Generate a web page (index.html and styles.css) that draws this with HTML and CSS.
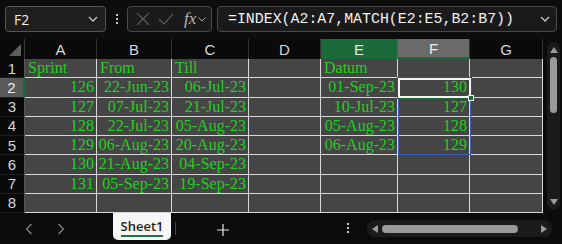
FILE: index.html
```html
<!DOCTYPE html>
<html>
<head>
<meta charset="utf-8">
<link rel="stylesheet" href="styles.css">
</head>
<body>
<div class="app">
  <div class="topbar">
    <div class="namebox">
      <span class="nb-text">F2</span>
      <svg class="chev" width="10" height="6" viewBox="0 0 10 6"><path d="M1 1 L5 5 L9 1" fill="none" stroke="#c8c8c8" stroke-width="1.3"/></svg>
    </div>
    <div class="vdots"><span></span><span></span><span></span></div>
    <div class="fxbox">
      <svg width="14" height="14" viewBox="0 0 14 14"><path d="M1 1 L13 13 M13 1 L1 13" stroke="#5a5a5a" stroke-width="1.2"/></svg>
      <svg width="16" height="12" viewBox="0 0 16 12"><path d="M1 6 L6 11 L15 1" fill="none" stroke="#5a5a5a" stroke-width="1.2"/></svg>
      <span class="fx">fx</span>
      <svg width="8" height="5" viewBox="0 0 8 5"><path d="M0.5 0.5 L4 4 L7.5 0.5" fill="none" stroke="#aaa" stroke-width="1"/></svg>
    </div>
    <div class="formula">
      <span class="f-text">=INDEX(A2:A7,MATCH(E2:E5,B2:B7))</span>
      <svg class="chev" width="10" height="6" viewBox="0 0 10 6"><path d="M1 1 L5 5 L9 1" fill="none" stroke="#c8c8c8" stroke-width="1.3"/></svg>
    </div>
  </div>

  <div class="sheet">
    <div class="grid">
      <div class="corner"><span class="tri"></span></div>
      <div class="ch">A</div><div class="ch">B</div><div class="ch">C</div><div class="ch">D</div>
      <div class="ch ch-e">E</div><div class="ch ch-f">F</div><div class="ch">G</div>

      <div class="rh">1</div>
      <div class="c">Sprint</div><div class="c">From</div><div class="c">Till</div><div class="c"></div>
      <div class="c">Datum</div><div class="c"></div><div class="c"></div>

      <div class="rh rh-sel">2</div>
      <div class="c r">126</div><div class="c r">22-Jun-23</div><div class="c r">06-Jul-23</div><div class="c"></div>
      <div class="c r">01-Sep-23</div><div class="c r">130</div><div class="c"></div>

      <div class="rh">3</div>
      <div class="c r">127</div><div class="c r">07-Jul-23</div><div class="c r">21-Jul-23</div><div class="c"></div>
      <div class="c r">10-Jul-23</div><div class="c r">127</div><div class="c"></div>

      <div class="rh">4</div>
      <div class="c r">128</div><div class="c r">22-Jul-23</div><div class="c r">05-Aug-23</div><div class="c"></div>
      <div class="c r">05-Aug-23</div><div class="c r">128</div><div class="c"></div>

      <div class="rh">5</div>
      <div class="c r">129</div><div class="c r">06-Aug-23</div><div class="c r">20-Aug-23</div><div class="c"></div>
      <div class="c r">06-Aug-23</div><div class="c r">129</div><div class="c"></div>

      <div class="rh">6</div>
      <div class="c r">130</div><div class="c r">21-Aug-23</div><div class="c r">04-Sep-23</div><div class="c"></div>
      <div class="c"></div><div class="c"></div><div class="c"></div>

      <div class="rh">7</div>
      <div class="c r">131</div><div class="c r">05-Sep-23</div><div class="c r">19-Sep-23</div><div class="c"></div>
      <div class="c"></div><div class="c"></div><div class="c"></div>

      <div class="rh">8</div>
      <div class="c"></div><div class="c"></div><div class="c"></div><div class="c"></div>
      <div class="c"></div><div class="c"></div><div class="c"></div>
    </div>
    <div class="vscroll">
      <div class="vtrack">
        <span class="tri-up"></span>
        <span class="vthumb"></span>
        <span class="tri-down"></span>
      </div>
    </div>
    <div class="range"></div>
    <div class="active"></div>
    <div class="handle"></div>
  </div>

  <div class="tabbar">
    <div class="navs">
      <svg width="8" height="12" viewBox="0 0 8 12"><path d="M6.5 1 L1.5 6 L6.5 11" fill="none" stroke="#8a8a8a" stroke-width="1.2"/></svg>
      <svg width="8" height="12" viewBox="0 0 8 12"><path d="M1.5 1 L6.5 6 L1.5 11" fill="none" stroke="#8a8a8a" stroke-width="1.2"/></svg>
    </div>
    <div class="tab"><span class="tab-text">Sheet1</span></div>
    <div class="tabsep"></div>
    <div class="plus">
      <svg width="12" height="12" viewBox="0 0 12 12"><path d="M6 0 V12 M0 6 H12" stroke="#e8e8e8" stroke-width="1.2"/></svg>
    </div>
    <div class="hdots"><span></span><span></span><span></span></div>
    <div class="hscroll">
      <span class="tri-left"></span>
      <span class="hthumb"></span>
      <span class="tri-right"></span>
    </div>
  </div>
</div>
</body>
</html>
```

FILE: styles.css
```css
* { box-sizing: border-box; }
html, body { margin: 0; padding: 0; }
body {
  background: #0b0b0b;
  width: 562px;
  height: 244px;
  overflow: hidden;
  font-family: "Liberation Sans", Arial, sans-serif;
}
.app { width: 562px; height: 244px; display: flex; flex-direction: column; }

/* ---------- top bar ---------- */
.topbar {
  height: 39px;
  display: flex;
  align-items: flex-start;
  padding: 6px 5px 0 5px;
  background: #0d0d0d;
}
.namebox {
  width: 101px; height: 26px;
  border: 1px solid #555;
  border-radius: 4px;
  background: #1e1e1e;
  display: flex; align-items: center; justify-content: space-between;
  padding: 0 7px 0 8px;
}
.nb-text { color: #f0f0f0; font-family: "Open Sans", "Noto Sans", sans-serif; font-size: 14px; }
.vdots {
  width: 21px; height: 26px;
  display: flex; flex-direction: column; align-items: center; justify-content: center; gap: 2px;
}
.vdots span, .hdots span { width: 2px; height: 2px; background: #c8c8c8; display: block; }
.fxbox {
  width: 85px; height: 26px;
  border: 1px solid #4a4a4a;
  border-radius: 4px;
  background: #1a1a1a;
  display: flex; align-items: center;
  padding: 0 0 0 8px;
  gap: 0;
}
.fxbox svg:nth-child(1) { margin-right: 8px; }
.fxbox svg:nth-child(2) { margin-right: 10px; }
.fx { color: #b4b4b4; font-family: "Liberation Serif", serif; font-style: italic; font-size: 17px; margin-right: 2px; }
.formula {
  margin-left: 5px;
  width: 340px; height: 26px;
  border: 1px solid #4a4a4a;
  border-radius: 4px;
  background: #1a1a1a;
  display: flex; align-items: center; justify-content: space-between;
  padding: 0 6px 0 10px;
}
.f-text { color: #f2f2f2; font-family: "Liberation Mono", "DejaVu Sans Mono", monospace; font-size: 14.9px; }

/* ---------- sheet ---------- */
.sheet { position: relative; height: 174px; display: flex; }
.grid {
  display: grid;
  grid-template-columns: 25px 72px 75px 77px 72px 77px 72px 73px;
  grid-template-rows: 20px repeat(8, 19.25px);
  width: 543px;
}
.corner { background: #0a0a0a; position: relative; border-right: 1px solid #3a3a3a; }
.tri {
  position: absolute; right: 3px; bottom: 3px;
  width: 0; height: 0;
  border-left: 12px solid transparent;
  border-bottom: 12px solid #5e5e5e;
}
.ch {
  background: #0a0a0a;
  color: #d6d6d6;
  font-size: 15px;
  display: flex; align-items: center; justify-content: center;
  border-right: 1px solid #333;
  padding-top: 1px;
}
.ch-e { background: #1b6b3a; color: #e8e8e8; border-right-color: #2a7a4a; }
.ch-f { background: #6a6a6a; color: #eeeeee; border-bottom: 2px solid #1b6b3a; }
.rh {
  background: #0a0a0a;
  color: #d6d6d6;
  font-size: 15px;
  display: flex; align-items: center; justify-content: center;
  border-right: 1px solid #555;
  border-bottom: 1px solid #1e1e1e;
}
.rh-sel { background: #5a5a5a; color: #f0f0f0; border-right: 2px solid #1b6b3a; }
.c {
  background: #454545;
  border-right: 1px solid #d8d8d8;
  border-bottom: 1px solid #d8d8d8;
  color: #1fd01f;
  font-family: "Liberation Serif", "Times New Roman", serif;
  font-size: 16px;
  line-height: 18px;
  padding: 0 3px;
  white-space: nowrap;
  overflow: visible;
  display: flex; align-items: center;
}
.c.r { justify-content: flex-end; padding-right: 2px; }

.vscroll { width: 19px; background: #0b0b0b; padding: 3px 2px 3px 4px; }
.vtrack {
  height: 100%;
  width: 13px;
  background: #1b1b1b;
  border-radius: 7px;
  position: relative;
  display: flex; flex-direction: column; align-items: center;
}
.tri-up {
  margin-top: 5px;
  width: 0; height: 0;
  border-left: 4px solid transparent; border-right: 4px solid transparent;
  border-bottom: 6px solid #9a9a9a;
}
.vthumb { margin-top: 4px; width: 7px; height: 56px; border-radius: 4px; background: #9a9a9a; }
.tri-down {
  margin-top: auto; margin-bottom: 5px;
  width: 0; height: 0;
  border-left: 4px solid transparent; border-right: 4px solid transparent;
  border-top: 6px solid #9a9a9a;
}

/* selection overlays */
.range {
  position: absolute; left: 398px; top: 58px; width: 73px; height: 58px;
  border: 1px solid #3b5fc4;
}
.active {
  position: absolute; left: 398px; top: 39px; width: 73px; height: 20px;
  border: 2px solid #f4f4f4;
  box-shadow: 0 0 0 1px #1b6b3a;
}
.handle {
  position: absolute; left: 468px; top: 56px; width: 6px; height: 6px;
  background: #1b6b3a;
  border: 1px solid #f4f4f4;
}

/* ---------- tab bar ---------- */
.tabbar {
  height: 31px;
  background: #0b0b0b;
  display: flex; align-items: flex-start;
  position: relative;
}
.navs { display: flex; align-items: center; gap: 24px; padding: 10px 0 0 25px; width: 113px; }
.tab {
  width: 58px; height: 27px;
  background: #f7f7f7;
  border-radius: 0 0 5px 5px;
  display: flex; flex-direction: column; align-items: center; justify-content: center;
  padding-top: 1px;
}
.tab-text {
  color: #1e1e1e; font-family: "Open Sans", "Noto Sans", sans-serif; font-weight: 600; font-size: 13px;
  border-bottom: 2px solid #1e7045; padding-bottom: 1px; line-height: 16px;
}
.tabsep { width: 1px; height: 13px; background: #444; margin: 9px 0 0 4px; }
.plus { margin: 9px 0 0 41px; width: 12px; height: 12px; }
.hdots {
  margin: 9px 0 0 118px; width: 2px; height: 12px;
  display: flex; flex-direction: column; justify-content: center; gap: 2px;
}
.hscroll {
  margin: 7px 0 0 18px;
  width: 185px; height: 17px;
  background: #1b1b1b; border-radius: 8px;
  display: flex; align-items: center; padding: 0 5px;
}
.tri-left {
  width: 0; height: 0;
  border-top: 4px solid transparent; border-bottom: 4px solid transparent;
  border-right: 6px solid #9a9a9a;
}
.hthumb { margin-left: 4px; width: 136px; height: 8px; border-radius: 4px; background: #9a9a9a; }
.tri-right {
  margin-left: auto;
  width: 0; height: 0;
  border-top: 4px solid transparent; border-bottom: 4px solid transparent;
  border-left: 6px solid #9a9a9a;
}
```
